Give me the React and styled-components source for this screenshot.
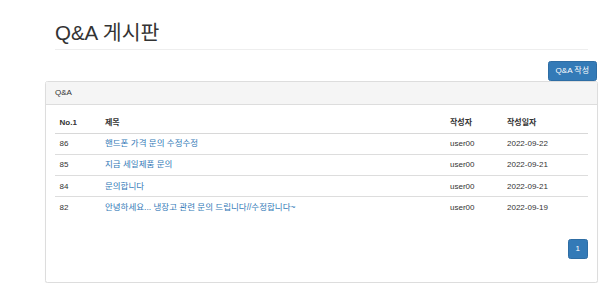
import React from "react";
import styled, { createGlobalStyle } from "styled-components";

const GlobalStyle = createGlobalStyle`
  html, body {
    margin: 0;
    padding: 0;
    background: #ffffff;
  }
  body {
    font-family: "Liberation Sans", Arial, "Noto Sans CJK KR", sans-serif;
    color: #333333;
    font-size: 8px;
  }
  * { box-sizing: border-box; }
`;

const Page = styled.div`
  width: 600px;
  padding: 0 2px 0 45px;
`;

const Header = styled.div`
  margin: 0 10px;
  padding: 21px 0 3.5px;
  border-bottom: 1px solid #eeeeee;
`;

const Title = styled.h1`
  margin: 0;
  font-size: 20.5px;
  line-height: 24px;
  font-weight: 400;
  color: #333333;
  font-family: "Liberation Sans", Arial, "Noto Sans CJK KR", sans-serif;
`;

const Toolbar = styled.div`
  display: flex;
  justify-content: flex-end;
  margin-top: 11px;
  padding-right: 1px;
`;

const PrimaryButton = styled.button`
  display: inline-flex;
  align-items: center;
  justify-content: center;
  height: ${(p) => p.$h || 20}px;
  padding: 0 ${(p) => p.$px || 7}px;
  min-width: ${(p) => p.$w || 0}px;
  font-family: "Liberation Sans", Arial, "Noto Sans CJK KR", sans-serif;
  font-size: 8px;
  line-height: 1;
  color: #ffffff;
  background: #337ab7;
  border: 1px solid #2e6da4;
  border-radius: 2.5px;
  cursor: pointer;
`;

const Panel = styled.div`
  border: 1px solid #dddddd;
  border-radius: 2.5px;
  background: #ffffff;
  box-shadow: 0 1px 1px rgba(0, 0, 0, 0.05);
`;

const PanelHeading = styled.div`
  height: 23px;
  line-height: 22px;
  padding: 0 9px;
  background: #f5f5f5;
  border-bottom: 1px solid #dddddd;
  color: #333333;
  font-size: 8px;
`;

const PanelBody = styled.div`
  padding: 8px 9px 9px;
`;

const Table = styled.table`
  width: 100%;
  border-collapse: collapse;
  table-layout: fixed;
  font-size: 8px;
`;

const HeadCell = styled.th`
  text-align: left;
  font-weight: 700;
  padding: 4.6px;
  line-height: 11px;
  border-bottom: 1px solid #d8d8d8;
  color: #333333;
`;

const Cell = styled.td`
  padding: 4.6px;
  line-height: 11px;
  border-top: ${(p) => (p.$first ? "0" : "1px solid #dddddd")};
  color: #333333;
  white-space: nowrap;
  overflow: hidden;
`;

const TitleLink = styled.a`
  color: #337ab7;
  text-decoration: none;
  font-size: 8.5px;
`;

const PagerRow = styled.div`
  display: flex;
  justify-content: flex-end;
  margin: 22px 0 13.5px;
`;

const rows = [
  { no: 86, title: "핸드폰 가격 문의 수정수정", user: "user00", date: "2022-09-22" },
  { no: 85, title: "지금 세일제품 문의", user: "user00", date: "2022-09-21" },
  { no: 84, title: "문의합니다", user: "user00", date: "2022-09-21" },
  { no: 82, title: "안녕하세요... 냉장고 관련 문의 드립니다//수정합니다~", user: "user00", date: "2022-09-19" },
];

export default function App() {
  return (
    <>
      <GlobalStyle />
      <Page>
        <Header>
          <Title>Q&amp;A 게시판</Title>
        </Header>
        <Toolbar>
          <PrimaryButton $w={49}>Q&amp;A 작성</PrimaryButton>
        </Toolbar>
        <Panel>
          <PanelHeading>Q&amp;A</PanelHeading>
          <PanelBody>
            <Table>
              <colgroup>
                <col style={{ width: "45.4px" }} />
                <col style={{ width: "345px" }} />
                <col style={{ width: "57px" }} />
                <col style={{ width: "85.6px" }} />
              </colgroup>
              <thead>
                <tr>
                  <HeadCell>No.1</HeadCell>
                  <HeadCell>제목</HeadCell>
                  <HeadCell>작성자</HeadCell>
                  <HeadCell>작성일자</HeadCell>
                </tr>
              </thead>
              <tbody>
                {rows.map((r, i) => (
                  <tr key={r.no}>
                    <Cell $first={i === 0}>{r.no}</Cell>
                    <Cell $first={i === 0}>
                      <TitleLink href="#">{r.title}</TitleLink>
                    </Cell>
                    <Cell $first={i === 0}>{r.user}</Cell>
                    <Cell $first={i === 0}>{r.date}</Cell>
                  </tr>
                ))}
              </tbody>
            </Table>
            <PagerRow>
              <PrimaryButton $w={20} $px={0}>1</PrimaryButton>
            </PagerRow>
          </PanelBody>
        </Panel>
      </Page>
    </>
  );
}
